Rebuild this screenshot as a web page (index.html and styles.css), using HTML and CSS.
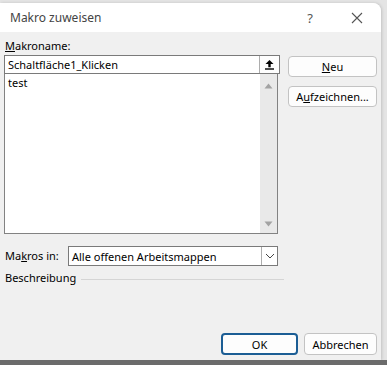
FILE: index.html
```html
<!DOCTYPE html>
<html lang="de">
<head>
<meta charset="utf-8">
<title>Makro zuweisen</title>
<link rel="stylesheet" href="styles.css">
</head>
<body>
<div class="page">
  <div class="dialog">
    <div class="titlebar">
      <span class="title">Makro zuweisen</span>
      <span class="help">?</span>
      <span class="close">
        <svg width="12" height="12" viewBox="0 0 12 12"><path d="M1 1L11 11M11 1L1 11" stroke="#555" stroke-width="1.1" fill="none"/></svg>
      </span>
    </div>
    <div class="body">
      <div class="top">
        <div class="left">
          <div class="label"><u>M</u>akroname:</div>
          <div class="input">
            <span class="input-text">Schaltfläche1_Klicken</span>
            <span class="upbtn">
              <svg width="11" height="11" viewBox="0 0 11 11"><path d="M5.5 1L1.5 5H4.3V8.2H6.7V5H9.5Z" fill="#000"/><rect x="1" y="9.3" width="9" height="1.4" fill="#000"/></svg>
            </span>
          </div>
          <div class="list">
            <div class="list-items"><div class="item">test</div></div>
            <div class="scrollbar">
              <svg width="9" height="6" viewBox="0 0 9 6"><path d="M4.5 0.5L8.5 5.5H0.5Z" fill="#a3a3a3"/></svg>
              <svg width="9" height="6" viewBox="0 0 9 6"><path d="M0.5 0.5H8.5L4.5 5.5Z" fill="#a3a3a3"/></svg>
            </div>
          </div>
        </div>
        <div class="right">
          <button class="btn"><u>N</u>eu</button>
          <button class="btn">A<u>u</u>fzeichnen...</button>
        </div>
      </div>
      <div class="macros-row">
        <span class="label">Ma<u>k</u>ros in:</span>
        <div class="select">
          <span class="select-text">Alle offenen Arbeitsmappen</span>
          <span class="select-btn">
            <svg width="10" height="6" viewBox="0 0 10 6"><path d="M1 1L5 5L9 1" stroke="#444" stroke-width="1" fill="none"/></svg>
          </span>
        </div>
      </div>
      <div class="desc-row">
        <span class="label">Beschreibung</span>
        <span class="rule"></span>
      </div>
      <div class="footer">
        <button class="btn btn-ok">OK</button>
        <button class="btn btn-cancel">Abbrechen</button>
      </div>
    </div>
  </div>
  <div class="statusbar"></div>
</div>
</body>
</html>
```

FILE: styles.css
```css
* { box-sizing: border-box; }
html, body { margin: 0; padding: 0; }
body {
  width: 387px;
  height: 365px;
  overflow: hidden;
  background: #e4e4e4;
  font-family: "Noto Sans", "Open Sans", sans-serif;
  font-size: 11px;
  color: #000;
}
.page {
  padding-top: 3px;
  display: flex;
  flex-direction: column;
}
.dialog {
  width: 381px;
  height: 357px;
  background: #f0f0f0;
  border-top-right-radius: 8px;
  overflow: hidden;
  display: flex;
  flex-direction: column;
  box-shadow: 1px 0 3px rgba(0,0,0,0.15);
}
.titlebar {
  height: 29px;
  background: #fff;
  display: flex;
  align-items: center;
  padding-left: 10px;
}
.title {
  flex: 1;
  color: #444;
  font-size: 12px;
}
.help {
  color: #555;
  font-size: 13px;
  width: 46px;
  text-align: center;
}
.close {
  width: 48px;
  display: flex;
  justify-content: center;
  align-items: center;
}
.body {
  flex: 1;
  display: flex;
  flex-direction: column;
  padding: 6px 4px 5px 4px;
}
.top {
  display: flex;
  gap: 8px;
}
.left {
  width: 276px;
  display: flex;
  flex-direction: column;
}
.label {
  line-height: 16px;
  padding-left: 1px;
}
.input {
  margin-top: 1px;
  height: 19px;
  border: 1px solid #7a7a7a;
  background: #fff;
  display: flex;
  align-items: center;
  padding-left: 3px;
}
.input-text { flex: 1; line-height: 16px; }
.upbtn {
  width: 20px;
  height: 17px;
  border-left: 1px solid #adadad;
  display: flex;
  align-items: center;
  justify-content: center;
  background: #fdfdfd;
}
.list {
  width: 274px;
  height: 160px;
  border: 1px solid #828282;
  border-top: none;
  background: #fff;
  display: flex;
}
.list-items { flex: 1; padding: 1px 3px; }
.item { line-height: 16px; }
.scrollbar {
  width: 17px;
  background: #e9e9e9;
  display: flex;
  flex-direction: column;
  justify-content: space-between;
  align-items: center;
  padding: 9px 0 6px;
}
.right {
  width: 89px;
  display: flex;
  flex-direction: column;
  gap: 9px;
  padding-top: 18px;
}
.btn {
  font-family: inherit;
  font-size: 11px;
  color: #000;
  background: #fdfdfd;
  border: 1px solid #c3c3c3;
  border-radius: 4px;
  height: 21px;
  padding: 0;
  line-height: 17px;
}
.macros-row {
  display: flex;
  align-items: center;
  margin-top: 12px;
}
.macros-row .label { width: 64px; }
.select {
  width: 210px;
  height: 20px;
  border: 1px solid #7a7a7a;
  background: #fff;
  display: flex;
  align-items: center;
  padding-left: 3px;
}
.select-text { flex: 1; }
.select-btn {
  width: 16px;
  height: 18px;
  border-left: 1px solid #adadad;
  display: flex;
  align-items: center;
  justify-content: center;
}
.desc-row {
  display: flex;
  align-items: center;
  gap: 5px;
  margin-top: 4px;
}
.rule {
  width: 203px;
  height: 1px;
  background: #d5d5d5;
  margin-top: 2px;
}
.footer {
  margin-top: auto;
  display: flex;
  justify-content: flex-end;
  gap: 6px;
}
.btn-ok {
  width: 77px;
  height: 22px;
  border: 2px solid #1b5d94;
}
.btn-cancel {
  width: 73px;
  height: 22px;
}
.statusbar {
  height: 5px;
  background: #6b6b6b;
}
```
